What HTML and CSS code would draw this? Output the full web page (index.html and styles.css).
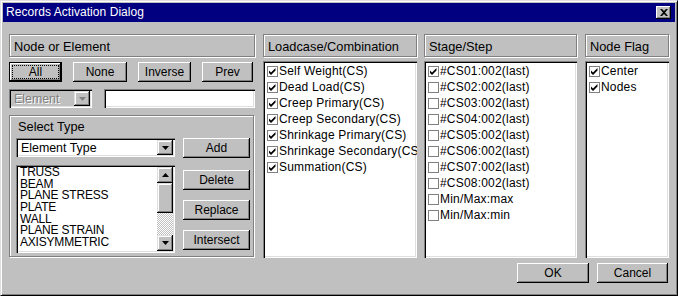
FILE: index.html
```html
<!DOCTYPE html>
<html>
<head>
<meta charset="utf-8">
<link rel="stylesheet" href="styles.css">
</head>
<body>
<div class="window">
  <div class="titlebar">
    <span class="title">Records Activation Dialog</span>
    <span class="close"><svg width="8" height="7" viewBox="0 0 8 7"><path d="M0 0h2l2 2 2-2h2L5 3.5 8 7H6L4 5 2 7H0l3-3.5z" fill="#000"/></svg></span>
  </div>
  <div class="content">
    <div class="panels">
      <div class="col-left">
        <div class="hdr">Node or Element</div>
        <div class="btn-row">
          <div class="btn btn-default w53"><span class="focus">All</span></div>
          <div class="btn w54">None</div>
          <div class="btn w53">Inverse</div>
          <div class="btn w51">Prev</div>
        </div>
        <div class="combo-row">
          <div class="combo disabled w83"><span class="combo-text">Element</span><span class="drop"><svg width="7" height="4" viewBox="0 0 7 4"><path d="M0 0h7L3.5 4z" fill="#808080"/></svg></span></div>
          <div class="field"></div>
        </div>
        <div class="group">
          <div class="group-label">Select Type</div>
          <div class="grp-row">
            <div class="combo w159"><span class="combo-text big">Element Type</span><span class="drop"><svg width="7" height="4" viewBox="0 0 7 4"><path d="M0 0h7L3.5 4z" fill="#000"/></svg></span></div>
            <div class="btn w67 h20">Add</div>
          </div>
          <div class="grp-row row2">
            <div class="listbox">
              <div class="type-items">
                <div>TRUSS</div>
                <div>BEAM</div>
                <div>PLANE STRESS</div>
                <div>PLATE</div>
                <div>WALL</div>
                <div>PLANE STRAIN</div>
                <div>AXISYMMETRIC</div>
              </div>
              <div class="vscroll">
                <span class="sbtn"><svg width="7" height="4" viewBox="0 0 7 4"><path d="M3.5 0L7 4H0z" fill="#000"/></svg></span>
                <span class="thumb"></span>
                <span class="track"></span>
                <span class="sbtn"><svg width="7" height="4" viewBox="0 0 7 4"><path d="M0 0h7L3.5 4z" fill="#000"/></svg></span>
              </div>
            </div>
            <div class="btn-col">
              <div class="btn w67 h20">Delete</div>
              <div class="btn w67 h20">Replace</div>
              <div class="btn w67 h20">Intersect</div>
            </div>
          </div>
        </div>
      </div>

      <div class="col w154">
        <div class="hdr">Loadcase/Combination</div>
        <div class="checklist">
          <div class="item"><span class="cb on"></span>Self Weight(CS)</div>
          <div class="item"><span class="cb on"></span>Dead Load(CS)</div>
          <div class="item"><span class="cb on"></span>Creep Primary(CS)</div>
          <div class="item"><span class="cb on"></span>Creep Secondary(CS)</div>
          <div class="item"><span class="cb on"></span>Shrinkage Primary(CS)</div>
          <div class="item"><span class="cb on"></span>Shrinkage Secondary(CS)</div>
          <div class="item"><span class="cb on"></span>Summation(CS)</div>
        </div>
      </div>

      <div class="col w153">
        <div class="hdr">Stage/Step</div>
        <div class="checklist">
          <div class="item"><span class="cb on"></span>#CS01:002(last)</div>
          <div class="item"><span class="cb"></span>#CS02:002(last)</div>
          <div class="item"><span class="cb"></span>#CS03:002(last)</div>
          <div class="item"><span class="cb"></span>#CS04:002(last)</div>
          <div class="item"><span class="cb"></span>#CS05:002(last)</div>
          <div class="item"><span class="cb"></span>#CS06:002(last)</div>
          <div class="item"><span class="cb"></span>#CS07:002(last)</div>
          <div class="item"><span class="cb"></span>#CS08:002(last)</div>
          <div class="item"><span class="cb"></span>Min/Max:max</div>
          <div class="item"><span class="cb"></span>Min/Max:min</div>
        </div>
      </div>

      <div class="col w84">
        <div class="hdr">Node Flag</div>
        <div class="checklist">
          <div class="item"><span class="cb on"></span>Center</div>
          <div class="item"><span class="cb on"></span>Nodes</div>
        </div>
      </div>
    </div>
    <div class="footer">
      <div class="btn w72 h20">OK</div>
      <div class="btn w71 h20">Cancel</div>
    </div>
  </div>
</div>
</body>
</html>
```

FILE: styles.css
```css
* { box-sizing: border-box; }
body {
  margin: 0;
  font-family: "Liberation Sans", Arial, sans-serif;
  font-size: 12px;
  background: #c0c0c0;
  color: #000;
}
.window {
  width: 678px;
  height: 296px;
  background: #c0c0c0;
  border: 1px solid;
  border-color: #dfdfdf #000 #000 #dfdfdf;
  box-shadow: inset 1px 1px 0 #fff, inset -1px -1px 0 #808080;
  padding: 2px;
  display: flex;
  flex-direction: column;
}
.titlebar {
  height: 19px;
  background: #000080;
  color: #fff;
  display: flex;
  align-items: center;
  justify-content: space-between;
  padding: 0 4px 0 3px;
  flex: none;
}
.title { font-size: 12px; line-height: 19px; letter-spacing: 0.05px; }
.close {
  width: 15px;
  height: 13px;
  background: #c0c0c0;
  box-shadow: inset -1px -1px #000, inset 1px 1px #fff, inset -2px -2px #808080;
  display: flex;
  align-items: center;
  justify-content: center;
  padding-bottom: 1px;
}
.content {
  flex: 1;
  padding: 12px 6px 0 6px;
  display: flex;
  flex-direction: column;
}
.panels { display: flex; height: 224px; }
.col-left { width: 246px; margin-right: 8px; display: flex; flex-direction: column; }
.col { display: flex; flex-direction: column; margin-right: 8px; }
.col.w154 { width: 154px; margin-right: 7px; }
.col.w153 { width: 153px; }
.col.w84 { width: 84px; margin-right: 0; }

.hdr {
  height: 23px;
  border: 1px solid #808080;
  box-shadow: inset 1px 1px 0 #fff, 1px 1px 0 #fff;
  display: flex;
  align-items: center;
  padding-left: 4px;
  padding-top: 1px;
  white-space: nowrap;
  overflow: hidden;
  font-size: 12.8px;
}

.btn {
  background: #c0c0c0;
  box-shadow: inset -1px -1px #000, inset 1px 1px #fff, inset -2px -2px #808080;
  display: flex;
  align-items: center;
  justify-content: center;
  height: 20px;
  white-space: nowrap;
}
.btn-default {
  border: 1px solid #000;
  box-shadow: inset -1px -1px #000, inset 1px 1px #fff, inset -2px -2px #808080;
  padding: 2px;
}
.focus {
  width: 100%;
  height: 100%;
  border: 1px dotted #000;
  display: flex;
  align-items: center;
  justify-content: center;
}
.w51 { width: 51px; }
.w53 { width: 53px; }
.w54 { width: 54px; }
.w67 { width: 67px; }
.w71 { width: 71px; }
.w72 { width: 72px; }
.w83 { width: 83px; }
.w159 { width: 159px; }
.h20 { height: 20px; }

.btn-row { display: flex; gap: 11px; margin-top: 5px; }
.combo-row { display: flex; gap: 12px; margin-top: 7px; height: 19px; }

.field, .combo, .listbox, .checklist {
  background: #fff;
  box-shadow: inset 1px 1px #808080, inset 2px 2px #000, inset -1px -1px #fff, inset -2px -2px #dfdfdf;
}
.field { flex: 1; height: 19px; }
.combo {
  height: 19px;
  padding: 2px;
  display: flex;
  align-items: center;
}
.combo.disabled { background: #c0c0c0; }
.combo-text { flex: 1; padding-left: 3px; white-space: nowrap; overflow: hidden; font-size: 12.4px; }
.combo.disabled .combo-text { color: #808080; text-shadow: 1px 1px 0 #fff; }
.drop {
  width: 16px;
  height: 15px;
  background: #c0c0c0;
  box-shadow: inset -1px -1px #000, inset 1px 1px #dfdfdf, inset -2px -2px #808080, inset 2px 2px #fff;
  display: flex;
  align-items: center;
  justify-content: center;
}

.group {
  margin-top: 7px;
  height: 142px;
  border: 1px solid #808080;
  box-shadow: inset 1px 1px 0 #fff, 1px 1px 0 #fff;
  width: 245px;
  padding: 2px 0 0 6px;
}
.group-label { line-height: 15px; padding-left: 2px; height: 15px; margin-top: 1px; font-size: 12.8px; }
.grp-row { display: flex; gap: 8px; margin-top: 4px; }
.grp-row.row2 { margin-top: 7px; }
.listbox {
  width: 159px;
  height: 88px;
  padding: 2px;
  display: flex;
}
.type-items { flex: 1; padding-left: 2px; overflow: hidden; }
.type-items div { line-height: 11.7px; height: 11.7px; white-space: nowrap; letter-spacing: -0.2px; }
.vscroll { width: 16px; display: flex; flex-direction: column; }
.sbtn {
  height: 16px;
  flex: none;
  background: #c0c0c0;
  box-shadow: inset -1px -1px #000, inset 1px 1px #dfdfdf, inset -2px -2px #808080, inset 2px 2px #fff;
  display: flex;
  align-items: center;
  justify-content: center;
}
.thumb {
  height: 30px;
  flex: none;
  background: #c0c0c0;
  box-shadow: inset -1px -1px #000, inset 1px 1px #dfdfdf, inset -2px -2px #808080, inset 2px 2px #fff;
}
.track {
  flex: 1;
  background: repeating-conic-gradient(#c0c0c0 0 25%, #fff 0 50%) 0 0 / 2px 2px;
}
.btn-col { display: flex; flex-direction: column; gap: 10px; padding-top: 5px; }

.checklist {
  margin-top: 4px;
  height: 197px;
  padding: 2px;
  overflow: hidden;
}
.item {
  height: 16px;
  display: flex;
  align-items: center;
  white-space: nowrap;
  letter-spacing: 0.2px;
}
.cb {
  width: 11px;
  height: 11px;
  flex: none;
  margin: 0 1px 0 2px;
  border: 1px solid #808080;
  background: #fff;
}
.cb.on {
  background: #fff url("data:image/svg+xml;utf8,<svg xmlns='http://www.w3.org/2000/svg' width='9' height='9' viewBox='0 0 9 9'><path d='M1 3.5 L3 5.5 L7.5 1 L7.5 3.5 L3 8 L1 6 Z' fill='black'/></svg>") no-repeat 0 0;
}

.footer {
  display: flex;
  justify-content: flex-end;
  gap: 8px;
  margin-top: 5px;
  padding-right: 1px;
}
```
